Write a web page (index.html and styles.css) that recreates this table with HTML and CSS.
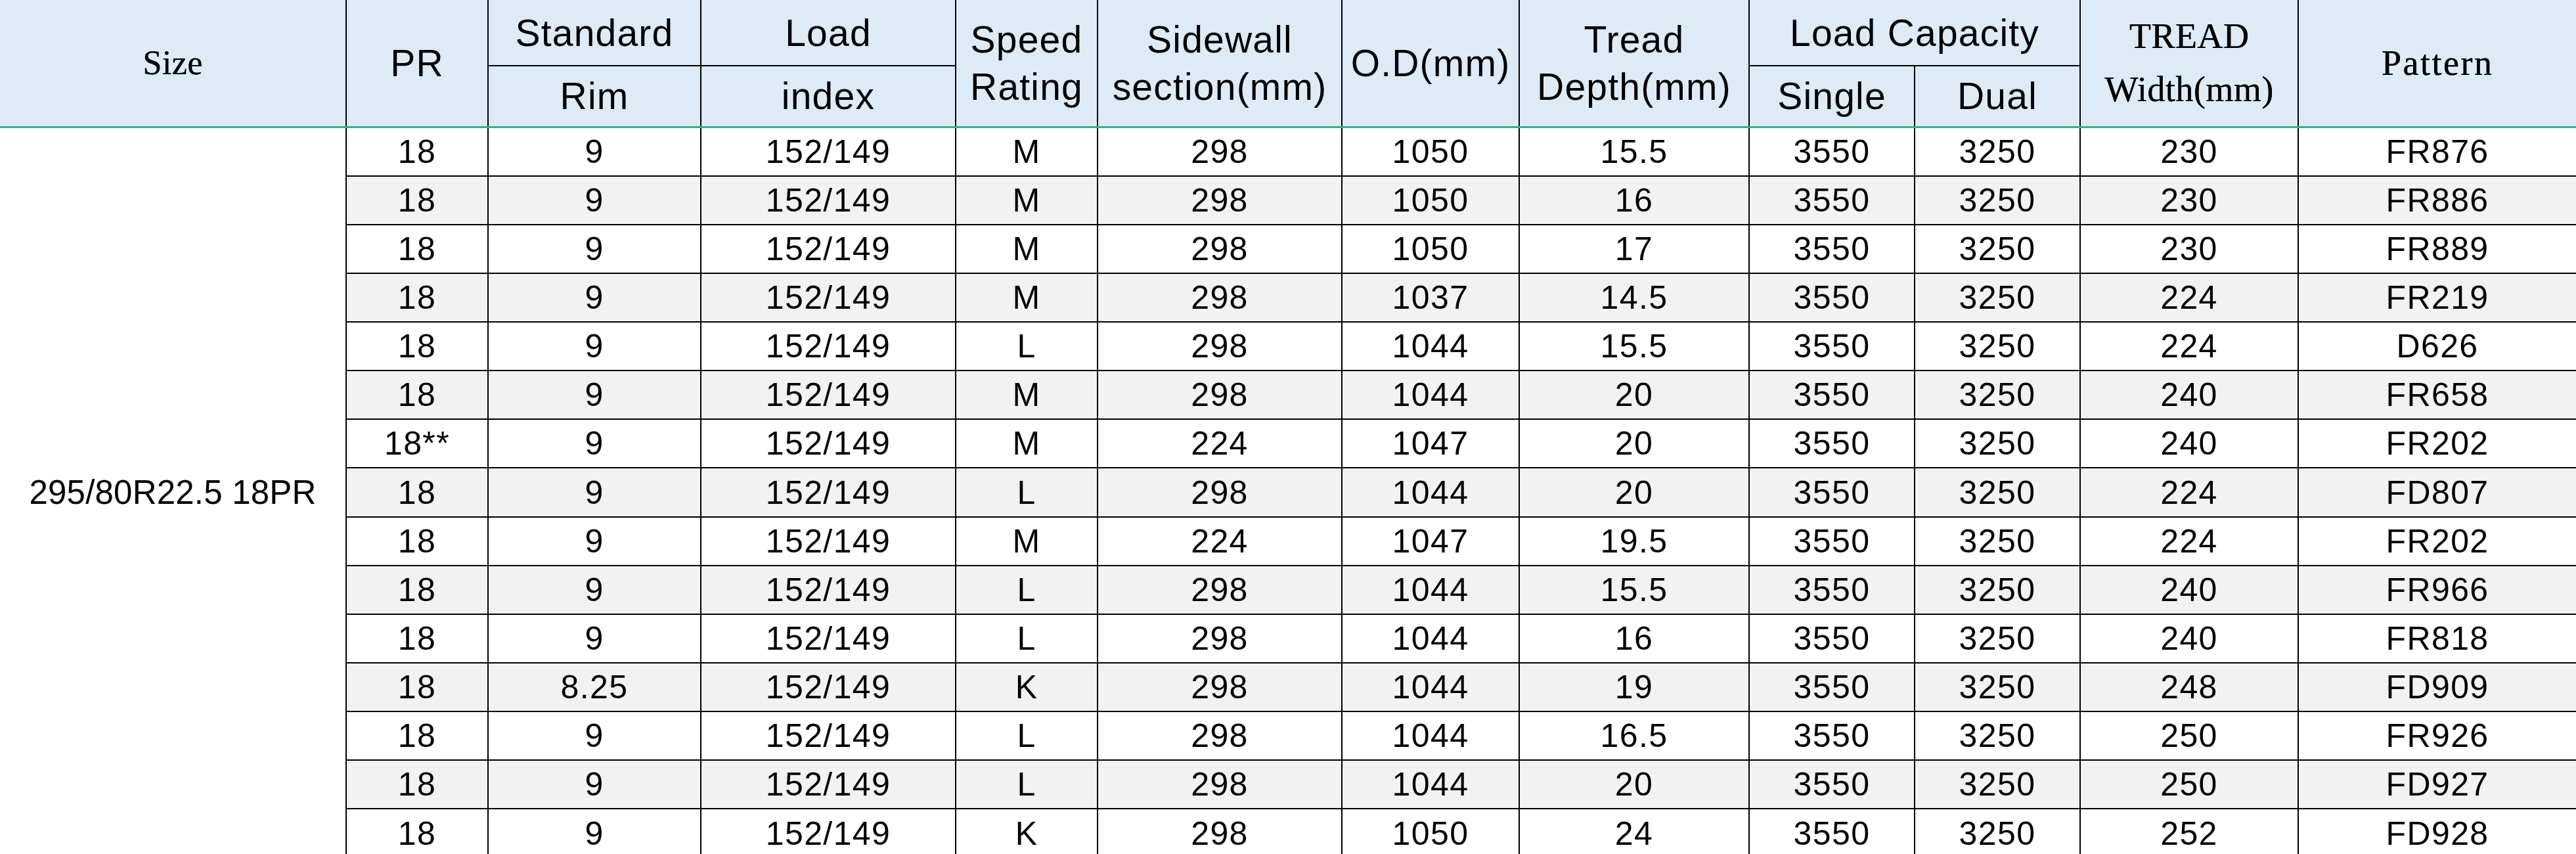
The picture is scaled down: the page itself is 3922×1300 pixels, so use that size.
FILE: index.html
```html
<!DOCTYPE html>
<html>
<head>
<meta charset="utf-8">
<link rel="stylesheet" href="styles.css">
</head>
<body>
<table class="spec">
  <colgroup>
    <col class="c-size"><col class="c-pr"><col class="c-rim"><col class="c-load"><col class="c-speed"><col class="c-side"><col class="c-od"><col class="c-depth"><col class="c-single"><col class="c-dual"><col class="c-width"><col class="c-pattern">
  </colgroup>
  <thead>
    <tr class="h1">
      <th rowspan="2" class="serif size-h first">Size</th>
      <th rowspan="2">PR</th>
      <th class="split">Standard</th>
      <th class="split">Load</th>
      <th rowspan="2" class="two">Speed<br>Rating</th>
      <th rowspan="2" class="two">Sidewall<br>section(mm)</th>
      <th rowspan="2">O.D(mm)</th>
      <th rowspan="2" class="two">Tread<br>Depth(mm)</th>
      <th colspan="2" class="split">Load Capacity</th>
      <th rowspan="2" class="serif two-serif">TREAD<br>Width(mm)</th>
      <th rowspan="2" class="serif pattern-h last">Pattern</th>
    </tr>
    <tr class="h2">
      <th>Rim</th>
      <th>index</th>
      <th>Single</th>
      <th>Dual</th>
    </tr>
  </thead>
  <tbody>
    <tr><td rowspan="15" class="size-cell first">295/80R22.5 18PR</td><td>18</td><td>9</td><td>152/149</td><td>M</td><td>298</td><td>1050</td><td>15.5</td><td>3550</td><td>3250</td><td>230</td><td class="last">FR876</td></tr>
    <tr class="alt"><td>18</td><td>9</td><td>152/149</td><td>M</td><td>298</td><td>1050</td><td>16</td><td>3550</td><td>3250</td><td>230</td><td class="last">FR886</td></tr>
    <tr><td>18</td><td>9</td><td>152/149</td><td>M</td><td>298</td><td>1050</td><td>17</td><td>3550</td><td>3250</td><td>230</td><td class="last">FR889</td></tr>
    <tr class="alt"><td>18</td><td>9</td><td>152/149</td><td>M</td><td>298</td><td>1037</td><td>14.5</td><td>3550</td><td>3250</td><td>224</td><td class="last">FR219</td></tr>
    <tr><td>18</td><td>9</td><td>152/149</td><td>L</td><td>298</td><td>1044</td><td>15.5</td><td>3550</td><td>3250</td><td>224</td><td class="last">D626</td></tr>
    <tr class="alt"><td>18</td><td>9</td><td>152/149</td><td>M</td><td>298</td><td>1044</td><td>20</td><td>3550</td><td>3250</td><td>240</td><td class="last">FR658</td></tr>
    <tr><td>18**</td><td>9</td><td>152/149</td><td>M</td><td>224</td><td>1047</td><td>20</td><td>3550</td><td>3250</td><td>240</td><td class="last">FR202</td></tr>
    <tr class="alt"><td>18</td><td>9</td><td>152/149</td><td>L</td><td>298</td><td>1044</td><td>20</td><td>3550</td><td>3250</td><td>224</td><td class="last">FD807</td></tr>
    <tr><td>18</td><td>9</td><td>152/149</td><td>M</td><td>224</td><td>1047</td><td>19.5</td><td>3550</td><td>3250</td><td>224</td><td class="last">FR202</td></tr>
    <tr class="alt"><td>18</td><td>9</td><td>152/149</td><td>L</td><td>298</td><td>1044</td><td>15.5</td><td>3550</td><td>3250</td><td>240</td><td class="last">FR966</td></tr>
    <tr><td>18</td><td>9</td><td>152/149</td><td>L</td><td>298</td><td>1044</td><td>16</td><td>3550</td><td>3250</td><td>240</td><td class="last">FR818</td></tr>
    <tr class="alt"><td>18</td><td>8.25</td><td>152/149</td><td>K</td><td>298</td><td>1044</td><td>19</td><td>3550</td><td>3250</td><td>248</td><td class="last">FD909</td></tr>
    <tr><td>18</td><td>9</td><td>152/149</td><td>L</td><td>298</td><td>1044</td><td>16.5</td><td>3550</td><td>3250</td><td>250</td><td class="last">FR926</td></tr>
    <tr class="alt"><td>18</td><td>9</td><td>152/149</td><td>L</td><td>298</td><td>1044</td><td>20</td><td>3550</td><td>3250</td><td>250</td><td class="last">FD927</td></tr>
    <tr><td>18</td><td>9</td><td>152/149</td><td>K</td><td>298</td><td>1050</td><td>24</td><td>3550</td><td>3250</td><td>252</td><td class="last">FD928</td></tr>
  </tbody>
</table>
</body>
</html>
```
FILE: styles.css
```css
html, body {
  margin: 0;
  padding: 0;
  background: #ffffff;
  overflow: hidden;
}

.spec {
  width: 3922px;
  table-layout: fixed;
  border-collapse: collapse;
  border-spacing: 0;
  font-family: "Liberation Sans", Arial, sans-serif;
  color: #000;
}

.c-size { width: 527px; }
.c-pr { width: 216px; }
.c-rim { width: 324px; }
.c-load { width: 388px; }
.c-speed { width: 216px; }
.c-side { width: 372px; }
.c-od { width: 270px; }
.c-depth { width: 350px; }
.c-single { width: 252px; }
.c-dual { width: 252px; }
.c-width { width: 332px; }
.c-pattern { width: 423px; }

.spec th,
.spec td {
  padding: 0;
  text-align: center;
  vertical-align: middle;
  border: 2px solid #000;
  white-space: nowrap;
  overflow: hidden;
}

.spec th {
  background: #ddebf7;
  font-weight: normal;
  font-size: 57px;
  letter-spacing: 1.2px;
  line-height: 72px;
  border-top: none;
}

.h1 { height: 100px; }
.h2 { height: 93px; }

.h1 th[rowspan],
.h2 th {
  border-bottom: 3px solid #3dae8c;
}

.spec .serif {
  font-family: "Liberation Serif", "Times New Roman", serif;
  font-size: 54px;
  letter-spacing: 0.5px;
  text-shadow: 0.4px 0 0 #000;
}

.spec .size-h {
  font-size: 52px;
}

.spec .pattern-h {
  letter-spacing: 2.5px;
}

.spec .two-serif {
  line-height: 81px;
}

.spec td {
  font-size: 50px;
  letter-spacing: 1.4px;
  line-height: 1;
  height: 72.15px;
}

.spec tbody tr:first-child td {
  border-top: 3px solid #3dae8c;
}

.spec tbody tr.alt td {
  background: #f2f2f2;
}

.spec td.size-cell {
  background: #ffffff;
  letter-spacing: 0.2px;
  font-size: 51px;
}

.spec .first { border-left: none; }
.spec .last { border-right: none; }
```
